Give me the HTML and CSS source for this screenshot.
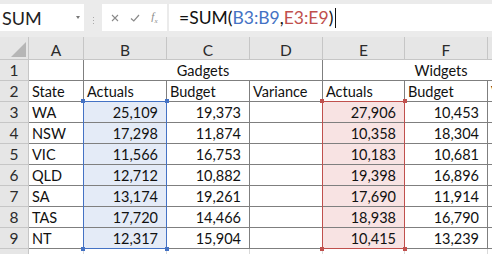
FILE: index.html
```html
<!DOCTYPE html>
<html lang="en">
<head>
    <meta charset="UTF-8">
    <title>Sheet - SUM</title>
    <link rel="stylesheet" href="styles.css">
</head>
<body>
    <div class="formula-bar">
        <div class="name-box">
            <span>SUM</span>
            <span class="drop"></span>
        </div>
        <div class="grip"><i></i><i></i><i></i></div>
        <div class="fn-box">
            <svg width="8" height="8" viewBox="0 0 8 8"><path d="M1 1L7 7M7 1L1 7" stroke="#8a8a8a" stroke-width="1.1"/></svg>
            <svg width="10" height="8" viewBox="0 0 10 8"><path d="M1 4.5L3.8 7L9 1" stroke="#8a8a8a" stroke-width="1.2" fill="none"/></svg>
            <span class="fx">f<sub>x</sub></span>
        </div>
        <div class="formula">=SUM(<span class="ref-b">B3:B9</span>,<span class="ref-e">E3:E9</span>)<span class="caret"></span></div>
    </div>

    <div class="sheet">
        <!-- column headers -->
        <div class="corner"><span></span></div>
        <div class="col-hd">A</div>
        <div class="col-hd">B</div>
        <div class="col-hd">C</div>
        <div class="col-hd">D</div>
        <div class="col-hd">E</div>
        <div class="col-hd">F</div>
        <div class="col-hd">G</div>

        <!-- row 1 -->
        <div class="row-hd">1</div>
        <div class="cell a1"></div>
        <div class="cell group">Gadgets</div>
        <div class="cell group">Widgets</div>

        <!-- row 2 -->
        <div class="row-hd">2</div>
        <div class="cell">State</div>
        <div class="cell">Actuals</div>
        <div class="cell">Budget</div>
        <div class="cell">Variance</div>
        <div class="cell">Actuals</div>
        <div class="cell">Budget</div>
        <div class="cell">Variance</div>

        <!-- data rows are filled in by the script below -->
        <div id="rows" class="rows"></div>

        <!-- row 10, only its top edge is in view -->
        <div class="row-hd last"></div>
        <div class="cell blank"></div>
        <div class="cell blank"></div>
        <div class="cell blank"></div>
        <div class="cell blank"></div>
        <div class="cell blank"></div>
        <div class="cell blank"></div>
        <div class="cell blank"></div>

        <!-- range outlines for the formula references -->
        <div class="range range-b"><i class="h tl"></i><i class="h tr"></i><i class="h bl"></i><i class="h br"></i></div>
        <div class="range range-e"><i class="h tl"></i><i class="h tr"></i><i class="h bl"></i><i class="h br"></i></div>
    </div>

    <script>
const data = [
    ['WA', '25,109', '19,373', '27,906', '10,453'],
    ['NSW', '17,298', '11,874', '10,358', '18,304'],
    ['VIC', '11,566', '16,753', '10,183', '10,681'],
    ['QLD', '12,712', '10,882', '19,398', '16,896'],
    ['SA', '13,174', '19,261', '17,690', '11,914'],
    ['TAS', '17,720', '14,466', '18,938', '16,790'],
    ['NT', '12,317', '15,904', '10,415', '13,239']
];

const rows = document.getElementById('rows');
data.forEach((r, i) => {
    rows.insertAdjacentHTML('beforeend', `
        <div class="row-hd">${i + 3}</div>
        <div class="cell">${r[0]}</div>
        <div class="cell num sel-b">${r[1]}</div>
        <div class="cell num">${r[2]}</div>
        <div class="cell"></div>
        <div class="cell num sel-e">${r[3]}</div>
        <div class="cell num">${r[4]}</div>
        <div class="cell"></div>
    `);
});
    </script>
</body>
</html>
```

FILE: styles.css
```css
body {
    margin: 0;
    width: 492px;
    height: 254px;
    overflow: hidden;
    font-family: Lato, "Liberation Sans", sans-serif;
    background: #fff;
}
.formula-bar {
    display: flex;
    height: 37px;
    padding-top: 4px;
    box-sizing: border-box;
    background: #ebebeb;
}
.name-box, .fn-box, .formula {
    height: 27px;
    background: #fff;
    box-sizing: border-box;
}
.name-box {
    width: 84px;
    display: flex;
    align-items: center;
    justify-content: space-between;
    padding: 0 4px 0 2px;
    font-size: 18px;
    color: #222;
}
.name-box .drop {
    width: 0;
    height: 0;
    border-left: 2px solid transparent;
    border-right: 2px solid transparent;
    border-top: 3px solid #777;
}
.grip {
    width: 18px;
    display: flex;
    flex-direction: column;
    align-items: center;
    justify-content: center;
    gap: 2px;
}
.grip i {
    width: 1px;
    height: 1px;
    background: #aaa;
}
.fn-box {
    width: 65px;
    display: flex;
    align-items: center;
    justify-content: space-around;
    padding: 0 4px;
}
.fx {
    font-family: "Liberation Serif", serif;
    font-style: italic;
    font-size: 11px;
    color: #8a8a8a;
}
.fx sub {
    font-size: 7px;
}
.formula {
    flex: 1;
    margin-left: 2px;
    padding-left: 10px;
    display: flex;
    align-items: center;
    font-size: 17.5px;
    color: #111;
}
.ref-b {
    color: #4472c4;
}
.ref-e {
    color: #c0504d;
}
.caret {
    width: 1px;
    height: 20px;
    margin-left: 2px;
    background: #111;
}
.sheet {
    position: relative;
    display: grid;
    grid-template-columns: 29px 55px 83px 83px 73px 82px 83px 72px;
    grid-template-rows: 23px repeat(9, 21px) 8px;
    font-size: 14.5px;
}
.rows {
    display: contents;
}
.corner, .col-hd, .row-hd, .cell {
    box-sizing: border-box;
    border-right: 1px solid #7f7f7f;
    border-bottom: 1px solid #7f7f7f;
    white-space: nowrap;
}
.corner, .col-hd, .row-hd {
    background: #e6e6e6;
    border-color: #c6c6c6;
    color: #2b2b2b;
    display: flex;
    align-items: center;
    justify-content: center;
    font-size: 15.5px;
}
.corner {
    position: relative;
}
.corner span {
    position: absolute;
    right: 2px;
    bottom: 2px;
    width: 15px;
    height: 15px;
    background: #b6b6b6;
    clip-path: polygon(100% 0, 100% 100%, 0 100%);
}
.col-hd {
    padding-top: 3px;
}
.row-hd.last {
    border-bottom: none;
}
.cell {
    display: flex;
    align-items: center;
    padding: 0 3px;
    color: #111;
    overflow: hidden;
}
.cell.num {
    justify-content: flex-end;
    padding-right: 8px;
}
.cell.group {
    grid-column: span 3;
    justify-content: center;
}
.cell.blank {
    border-color: #d9d9d9;
    border-bottom: none;
}
.sel-b {
    background: #e4ebf7;
}
.sel-e {
    background: #f8e3e3;
}
.range {
    position: absolute;
    top: -1px;
    left: -1px;
    right: 0;
    bottom: 0;
    grid-row: 4 / 11;
    border: 1px solid #4472c4;
}
.range-b {
    grid-column: 3 / 4;
}
.range-e {
    grid-column: 6 / 7;
    border-color: #c0504d;
}
.range .h {
    position: absolute;
    width: 4px;
    height: 4px;
    background: #4472c4;
}
.range-e .h {
    background: #c0504d;
}
.h.tl { left: -3px; top: -3px; }
.h.tr { right: -3px; top: -3px; }
.h.bl { left: -3px; bottom: -3px; }
.h.br { right: -3px; bottom: -3px; }
```
